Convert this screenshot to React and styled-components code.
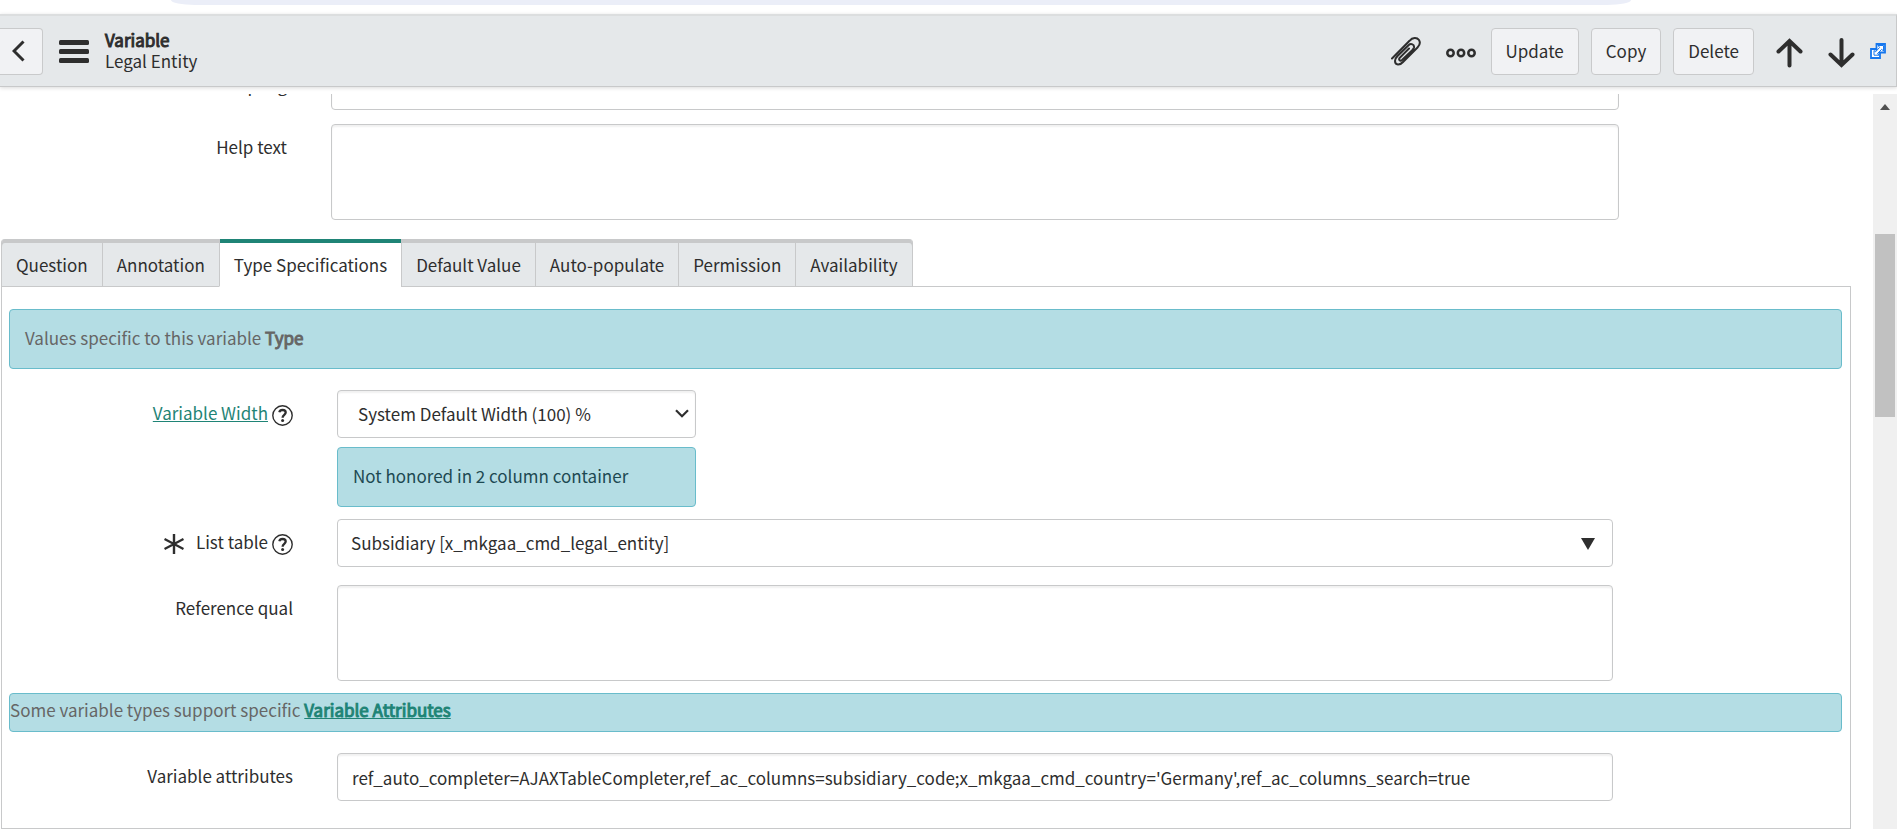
import React, { useState } from "react";
import styled, { createGlobalStyle } from "styled-components";

const tabs = [
  "Question",
  "Annotation",
  "Type Specifications",
  "Default Value",
  "Auto-populate",
  "Permission",
  "Availability",
];

export default function App() {
  const [activeTab, setActiveTab] = useState("Type Specifications");
  const [attributes, setAttributes] = useState(
    "ref_auto_completer=AJAXTableCompleter,ref_ac_columns=subsidiary_code;x_mkgaa_cmd_country='Germany',ref_ac_columns_search=true"
  );

  return (
    <>
      <GlobalStyle />
      <Page>
        <BrowserStrip>
          <AddressBar />
        </BrowserStrip>

        <Header>
          <BackButton aria-label="Back">
            <svg width="13" height="22" viewBox="0 0 13 22">
              <path d="M11.5 1.5L2 11l9.5 9.5" fill="none" stroke="currentColor" strokeWidth="3" />
            </svg>
          </BackButton>
          <IconButton aria-label="Menu">
            <svg width="30" height="26" viewBox="0 -2 30 26" fill="currentColor">
              <rect width="30" height="5" rx="1.5" y="0" />
              <rect width="30" height="5" rx="1.5" y="9" />
              <rect width="30" height="5" rx="1.5" y="18" />
            </svg>
          </IconButton>
          <Title>
            <strong>Variable</strong>
            <span>Legal Entity</span>
          </Title>
          <Actions>
            <IconButton aria-label="Manage attachments">
              <svg width="30" height="32" viewBox="0 -2 30 32" fill="none" stroke="currentColor" strokeWidth="2" strokeLinecap="round">
                <path d="M1 21.500L18.500 3.800C21.500 .300 26 .300 28 3C29.500 5.500 29 8 26.500 10.500L12 25C9 28.500 4 28.500 4 24C4 22 5 20.500 6.500 19L17.500 8.200C20 6 23.500 7.500 23 10.500C22.800 11.500 22 12.500 21 13.500L11 23C9 24.500 7.500 23 8.500 21L18 11.500" />
              </svg>
            </IconButton>
            <IconButton aria-label="More options">
              <svg width="30" height="14" viewBox="0 -4 30 14" fill="none" stroke="currentColor" strokeWidth="2.500">
                <circle cx="4.500" cy="5" r="3.200" />
                <circle cx="15" cy="5" r="3.200" />
                <circle cx="25.500" cy="5" r="3.200" />
              </svg>
            </IconButton>
            <ButtonGroup>
              <Button>Update</Button>
              <Button>Copy</Button>
              <Button>Delete</Button>
            </ButtonGroup>
            <IconButton aria-label="Previous record">
              <svg width="27" height="34" viewBox="0 -4 27 34" fill="none" stroke="currentColor" strokeWidth="4" strokeLinecap="round">
                <path d="M13.500 27.500V3.500M2.500 13.500L13.500 3L24.500 13.500" />
              </svg>
            </IconButton>
            <IconButton aria-label="Next record">
              <svg width="27" height="34" viewBox="0 -4 27 34" fill="none" stroke="currentColor" strokeWidth="4" strokeLinecap="round">
                <path d="M13.500 2V26M2.500 16.500L13.500 27L24.500 16.500" />
              </svg>
            </IconButton>
            <PopoutLink href="#popout" aria-label="Open in new window">
              <svg width="16" height="16" viewBox="0 0 16 16" fill="#fff" stroke="#1677ee">
                <path d="M1 6h9v9H1z" strokeWidth="1.800" />
                <path d="M6.500 1H15v8.500H6.500z" strokeWidth="1.800" />
                <path d="M8 2.500h5.500V8l-1.800-1.700l-4.200 4.200l1.500 1.700H4V7.500l1.600 1.300l4-4.400z" />
              </svg>
            </PopoutLink>
          </Actions>
        </Header>

        <Body>
          <Form>
            <TopFields>
              <Row>
                <Label htmlFor="help-tag">Help tag</Label>
                <Input id="help-tag" />
              </Row>
              <Row>
                <Label htmlFor="help-text">Help text</Label>
                <TextArea id="help-text" />
              </Row>
            </TopFields>

            <TabList role="tablist">
              {tabs.map((tab) => (
                <Tab
                  key={tab}
                  role="tab"
                  aria-selected={tab === activeTab}
                  $active={tab === activeTab}
                  onClick={() => setActiveTab(tab)}
                >
                  {tab}
                </Tab>
              ))}
            </TabList>

            <Panel role="tabpanel">
              <Banner>
                Values specific to this variable <strong>Type</strong>
              </Banner>

              <PanelFields>
                <PanelRow>
                  <Label htmlFor="variable-width">
                    <a href="#variable-width">Variable Width</a>
                    <HelpIcon />
                  </Label>
                  <NarrowField>
                    <SelectBox>
                      <Select id="variable-width" $indent={20}>
                        <option>System Default Width (100) %</option>
                      </Select>
                      <svg width="14" height="9" viewBox="0 0 14 9">
                        <path d="M1 1.200l6 6l6-6" fill="none" stroke="currentColor" strokeWidth="2.200" />
                      </svg>
                    </SelectBox>
                    <Note>Not honored in 2 column container</Note>
                  </NarrowField>
                </PanelRow>
                <PanelRow>
                  <Label htmlFor="list-table">
                    <Required />
                    List table
                    <HelpIcon />
                  </Label>
                  <SelectBox $wide>
                    <Select id="list-table" $indent={13} $flat>
                      <option>Subsidiary [x_mkgaa_cmd_legal_entity]</option>
                    </Select>
                    <svg width="14" height="12" viewBox="0 0 14 12">
                      <path d="M0 0h14L7 12z" fill="currentColor" />
                    </svg>
                  </SelectBox>
                </PanelRow>
                <PanelRow $spaced>
                  <Label htmlFor="reference-qual">Reference qual</Label>
                  <TextArea id="reference-qual" />
                </PanelRow>
              </PanelFields>

              <Banner $compact>
                Some variable types support specific{" "}
                <a href="#variable-attributes">Variable Attributes</a>
              </Banner>

              <PanelRow $last>
                <Label htmlFor="variable-attributes">Variable attributes</Label>
                <Input
                  id="variable-attributes"
                  value={attributes}
                  onChange={(e) => setAttributes(e.target.value)}
                />
              </PanelRow>
            </Panel>
          </Form>

          <Scrollbar>
            <svg width="10" height="6" viewBox="0 0 10 6">
              <path d="M0 6L5 0l5 6z" fill="#505050" />
            </svg>
            <Thumb />
          </Scrollbar>
        </Body>
      </Page>
    </>
  );
}

function HelpIcon() {
  return (
    <svg width="21" height="21" viewBox="0 0 21 21" fill="none" stroke="currentColor">
      <circle cx="10.500" cy="10.500" r="9.700" strokeWidth="1.400" />
      <path d="M7.300 7.300C7.800 5.500 9.200 5 10.500 5C12.400 5 13.700 6 13.700 7.600C13.700 9.900 10.600 9.900 10.600 12.700" strokeWidth="2.300" />
      <circle cx="10.600" cy="15.600" r="1.500" fill="currentColor" stroke="none" />
    </svg>
  );
}

function Required() {
  return (
    <RequiredMark width="20" height="20" viewBox="0 0 20 20" aria-label="Required">
      <path d="M10 0v20M.500 5l19 10M19.500 5L.500 15" stroke="currentColor" strokeWidth="2.400" />
    </RequiredMark>
  );
}

const GlobalStyle = createGlobalStyle`
  * {
    box-sizing: border-box;
  }

  body {
    margin: 0;
    background: #fff;
    color: #2e2e2e;
    font-family: "Noto Sans CJK SC", "Noto Sans", sans-serif;
    font-size: 17px;
    line-height: 24px;
  }

  button, input, select, textarea {
    font: inherit;
    color: inherit;
  }

  /* bold keeps the widths of the regular face */
  strong {
    font-weight: normal;
    -webkit-text-stroke: 1px currentColor;
  }

  a {
    color: #1f8476;
  }

  svg {
    flex: none;
    display: block;
  }
`;

const Page = styled.div`
  height: 100vh;
  display: flex;
  flex-direction: column;
  overflow: hidden;
`;

const BrowserStrip = styled.div`
  flex: none;
  height: 14px;
  padding: 0 14% 0 9%;
`;

const AddressBar = styled.div`
  height: 5px;
  background: #ebeef8;
  border-radius: 0 0 24px 24px / 0 0 5px 5px;
`;

const Header = styled.header`
  flex: none;
  display: flex;
  align-items: center;
  height: 73px;
  padding-right: 10px;
  background: #e5e8ea;
  border: solid #c8c9ca;
  border-width: 2px 1px 1px 0;
  border-top-color: #dcdedf;
  box-shadow: 0 1px 4px rgba(0, 0, 0, 0.15);
`;

const Button = styled.button`
  height: 47px;
  padding: 0 14px;
  background: #f1f2f4;
  border: 1px solid #c9cacb;
  border-radius: 4px;
  cursor: pointer;
`;

const BackButton = styled(Button)`
  display: flex;
  align-items: center;
  width: 43px;
  padding: 0 0 0 12px;
  margin-right: 16px;
  border-left: none;
  border-radius: 0 4px 4px 0;
`;

const IconButton = styled.button`
  display: flex;
  padding: 0;
  background: none;
  border: none;
  cursor: pointer;
`;

const Title = styled.div`
  display: flex;
  flex-direction: column;
  margin-left: 16px;
  padding-bottom: 2px;
  line-height: 21px;
`;

const Actions = styled.div`
  display: flex;
  align-items: center;
  gap: 25px;
  margin-left: auto;
`;

const ButtonGroup = styled.div`
  display: flex;
  gap: 12px;
  margin: 0 -3px 0 -10px;
`;

const PopoutLink = styled.a`
  margin-left: -10px;
`;

const Body = styled.div`
  flex: 1;
  min-height: 0;
  display: flex;
  margin-top: 7px;
  overflow: hidden;
`;

const Form = styled.form`
  flex: 1;
  min-width: 0;
`;

/* scrolled a little, so the first row is cut by the header */
const TopFields = styled.div`
  display: grid;
  gap: 14px;
  margin: -32px 0 19px;
`;

const Row = styled.div`
  display: grid;
  grid-template-columns: 331fr 1288fr 254fr;
`;

const Label = styled.label`
  display: flex;
  justify-content: flex-end;
  gap: 4px;
  padding: 11px 44px 0 0;
  height: 37px;
  white-space: nowrap;

  svg {
    margin-top: 4px;
  }
`;

const RequiredMark = styled.svg`
  margin-right: 8px;
`;

const Input = styled.input`
  width: 100%;
  height: 48px;
  padding: 0 14px;
  background: #fff;
  border: 1px solid #c8c9ca;
  border-radius: 4px;
  box-shadow: inset 0 2px 2px rgba(0, 0, 0, 0.06);
`;

const TextArea = styled.textarea`
  display: block;
  width: 100%;
  height: 96px;
  padding: 10px 14px;
  border: 1px solid #c8c9ca;
  border-radius: 4px;
  box-shadow: inset 0 2px 2px rgba(0, 0, 0, 0.06);
  resize: none;
`;

const TabList = styled.div`
  display: flex;
  margin-left: 1px;
`;

const Tab = styled.button.attrs({ type: "button" })`
  height: 48px;
  margin-bottom: -1px;
  padding: 4px 14px 0;
  background: ${({ $active }) => ($active ? "#fff" : "#e5e8ea")};
  border: solid #c8c9ca;
  border-width: 0 0 1px 1px;
  border-bottom-color: ${({ $active }) => ($active ? "#fff" : "#c8c9ca")};
  box-shadow: inset 0 4px 0 ${({ $active }) => ($active ? "#1f8476" : "#c8c9ca")};
  cursor: pointer;
  z-index: 1;

  &:first-child {
    border-top-left-radius: 4px;
  }

  &:last-child {
    border-right-width: 1px;
    border-top-right-radius: 4px;
  }
`;

const Panel = styled.div`
  margin: 0 22px 0 1px;
  padding-top: 22px;
  border: 1px solid #c8c9ca;
`;

const Banner = styled.div`
  margin: 0 8px 0 7px;
  padding: ${({ $compact }) => ($compact ? "4px 0 9px" : "16px 15px 18px")};
  background: #b4dde4;
  border: 1px solid #69bccb;
  border-radius: 4px;
  color: #666;

  a {
    -webkit-text-stroke: 1px currentColor;
  }
`;

const PanelFields = styled.div`
  margin: 21px 0 12px;
`;

const PanelRow = styled.div`
  display: grid;
  grid-template-columns: 335fr 1276fr 237fr;
  margin-top: ${({ $spaced }) => ($spaced ? "18px" : "0")};
  padding: ${({ $last }) => ($last ? "21px 0 27px" : "0")};
`;

const NarrowField = styled.div`
  display: grid;
  gap: 9px;
  width: 28%;
  min-width: 359px;
  margin-bottom: 12px;
`;

const SelectBox = styled.div`
  position: relative;

  svg {
    position: absolute;
    top: 19px;
    right: ${({ $wide }) => ($wide ? "18px" : "7px")};
    pointer-events: none;
  }
`;

const Select = styled.select`
  display: block;
  appearance: none;
  width: 100%;
  height: 48px;
  padding: 0 30px 0 ${({ $indent }) => $indent}px;
  background: #fff;
  border: 1px solid #c8c9ca;
  border-radius: 4px;
  box-shadow: ${({ $flat }) => ($flat ? "none" : "inset 0 2px 2px rgba(0, 0, 0, 0.06)")};
`;

const Note = styled.div`
  padding: 16px 15px 18px;
  background: #b4dde4;
  border: 1px solid #69bccb;
  border-radius: 4px;
  color: #1d4952;
`;

const Scrollbar = styled.div`
  flex: none;
  width: 24px;
  padding: 10px 2px 0;
  background: #f0f0f0;

  svg {
    margin: 0 auto;
  }
`;

const Thumb = styled.div`
  height: 183px;
  margin-top: 124px;
  background: #c1c1c1;
`;
